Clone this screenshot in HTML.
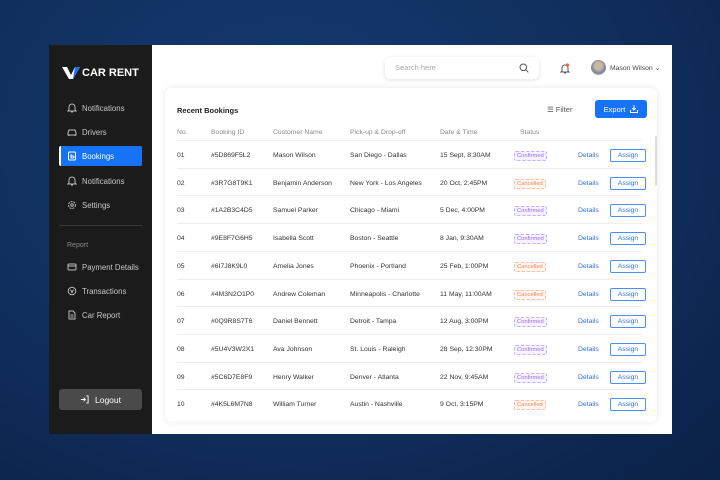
<!DOCTYPE html>
<html><head><meta charset="utf-8"><style>
*{box-sizing:border-box;margin:0;padding:0}
body{width:720px;height:480px;overflow:hidden;font-family:"Liberation Sans",sans-serif;background:radial-gradient(ellipse at 40% 30%,#153a72 0%,#11305f 50%,#0b2147 100%);position:relative}
.frame{position:absolute;left:49px;top:45px;width:623px;height:389px;display:flex}
.side{width:103px;background:#1b1b1b;position:relative;color:#bdbdbd;font-size:7.8px}
.main{flex:1;background:#fff;position:relative}
.logo{position:absolute;left:13px;top:21px;display:flex;align-items:center;color:#fff;font-weight:bold;font-size:11px}
.nav{position:absolute;left:10px;height:20px;width:83px;display:flex;align-items:center;padding-left:8px;gap:5px;color:#c8c8c8}
.nav svg{width:10px;height:10px}
.nav.act{background:#1673f5;color:#fff;border-left:2px solid #fff;border-radius:2px;padding-left:6px}
.sep{position:absolute;left:10px;width:83px;border-top:1px solid #3a3a3a;top:180px}
.rep{position:absolute;left:18px;top:197px;font-size:7px;color:#8a8a8a}
.logout{position:absolute;left:10px;top:344px;width:83px;height:21px;background:#4a4a4a;border-radius:3px;color:#fff;font-size:8.5px;display:flex;align-items:center;justify-content:center;gap:6px}
.search{position:absolute;left:233px;top:12px;width:154px;height:22px;border-radius:5px;box-shadow:0 1px 4px rgba(0,0,0,.12);font-size:7.5px;color:#aaa;padding:6px 10px}
.card{position:absolute;left:13px;top:43px;width:492px;height:334px;border-radius:6px;box-shadow:0 0 6px rgba(0,0,0,.1);background:#fff}
.t{position:absolute;font-size:6.8px;color:#333;white-space:nowrap}
.h{color:#8a8a8a}
.line{position:absolute;left:12px;width:465px;border-top:1px solid #eeeeee}
.badge{position:absolute;font-size:5.8px;padding:1px 2px;border:1px dashed;border-radius:2px}
.conf{color:#9b6ef3;border-color:#c6b0fa;background:#f6f1ff}
.canc{color:#f08a5c;border-color:#f8bfa3;background:#fff4ef}
.assign{position:absolute;width:36px;height:13px;border:1px solid #4b8ef6;border-radius:2px;color:#2f6fe0;font-size:6.8px;display:flex;align-items:center;justify-content:center}
.det{position:absolute;color:#2f6fe0;font-size:6.8px}
</style></head><body>
<div class="frame">
<div class="side">
 <div class="logo"><svg width="18" height="14" viewBox="0 0 18 14"><path d="M0 1h5l4 8 4-8h5l-7 12H7z" fill="#fff"/><path d="M13 1h5l-7 12z" fill="#1673f5"/></svg><span style="margin-left:2px">CAR RENT</span></div>
 <div class="nav" style="top:53px"><svg viewBox="0 0 10 10"><path d="M2 7V4a3 3 0 016 0v3l1 1H1zM4 9h2" stroke="#bbb" fill="none"/></svg>Notifications</div>
 <div class="nav" style="top:77px"><svg viewBox="0 0 10 10"><path d="M1 6l1-3h6l1 3v2H1zM2 8v1M8 8v1" stroke="#bbb" fill="none"/></svg>Drivers</div>
 <div class="nav act" style="top:101px"><svg viewBox="0 0 10 10"><rect x="1.5" y="1" width="7" height="8" rx="1" stroke="#fff" fill="none"/><path d="M4 3v4h2a1 1 0 000-2H4" stroke="#fff" fill="none"/></svg>Bookings</div>
 <div class="nav" style="top:126px"><svg viewBox="0 0 10 10"><path d="M2 7V4a3 3 0 016 0v3l1 1H1zM4 9h2" stroke="#bbb" fill="none"/></svg>Notifications</div>
 <div class="nav" style="top:150px"><svg viewBox="0 0 10 10"><circle cx="5" cy="5" r="3.5" stroke="#bbb" fill="none" stroke-dasharray="2 1"/><circle cx="5" cy="5" r="1.3" stroke="#bbb" fill="none"/></svg>Settings</div>
 <div class="sep"></div>
 <div class="rep">Report</div>
 <div class="nav" style="top:212px"><svg viewBox="0 0 10 10"><rect x="1" y="2" width="8" height="6" rx="1" stroke="#bbb" fill="none"/><path d="M1 4h8" stroke="#bbb"/></svg>Payment Details</div>
 <div class="nav" style="top:236px"><svg viewBox="0 0 10 10"><circle cx="5" cy="5" r="3.8" stroke="#bbb" fill="none"/><path d="M3.5 3.5L5 6.5 6.5 3.5" stroke="#bbb" fill="none"/></svg>Transactions</div>
 <div class="nav" style="top:260px"><svg viewBox="0 0 10 10"><path d="M2 1h4l2 2v6H2z" stroke="#bbb" fill="none"/><path d="M3.5 5h3M3.5 7h3" stroke="#bbb"/></svg>Car Report</div>
 <div class="logout"><svg width="9" height="9" viewBox="0 0 10 10"><path d="M1 5h5M4 3l2 2-2 2M7 1h2v8H7" stroke="#fff" fill="none"/></svg>Logout</div>
</div>
<div class="main">
 <div class="search">Search here<svg style="position:absolute;right:10px;top:6px" width="10" height="10" viewBox="0 0 10 10"><circle cx="4.3" cy="4.3" r="3.3" stroke="#555" fill="none"/><path d="M6.8 6.8L9.3 9.3" stroke="#555"/></svg></div>
 <svg style="position:absolute;left:408px;top:18px" width="10" height="11" viewBox="0 0 10 11"><path d="M2 8V5a3 3 0 016 0v3l1 1H1zM4 10h2" stroke="#555" fill="none"/><circle cx="7.5" cy="2" r="1.6" fill="#f0653a"/></svg>
 <div style="position:absolute;left:439px;top:15px;width:15px;height:15px;border-radius:50%;background:radial-gradient(circle at 50% 40%,#c9b8a8 30%,#7d8793 60%,#d0d4d8 100%)"></div>
 <div class="t" style="left:458px;top:19px;font-size:6.8px;color:#444">Mason Wilson ⌄</div>
 <div class="card">
  <div class="t" style="left:12px;top:18px;font-size:7.5px;font-weight:bold;color:#222">Recent Bookings</div>
  <div class="t" style="left:382px;top:17px;font-size:7.5px;color:#555">☰ Filter</div>
  <div style="position:absolute;left:430px;top:12px;width:52px;height:18px;background:#1673f5;border-radius:3px;color:#fff;font-size:7.5px;display:flex;align-items:center;justify-content:center;gap:5px">Export <svg width="8" height="8" viewBox="0 0 8 8"><path d="M4 0v5M2 3l2 2 2-2M0.5 5v2.5h7V5" stroke="#fff" fill="none"/></svg></div>
  <div class="t h" style="left:12px;top:41px">No.</div>
  <div class="t h" style="left:46px;top:41px">Booking ID</div>
  <div class="t h" style="left:108px;top:41px">Customer Name</div>
  <div class="t h" style="left:185px;top:41px">Pick-up &amp; Drop-off</div>
  <div class="t h" style="left:275px;top:41px">Date &amp; Time</div>
  <div class="t h" style="left:355px;top:41px">Status</div>
  <div style="position:absolute;left:490px;top:48px;width:2px;height:50px;background:#ddd;border-radius:1px"></div>
  <div id="rows"></div>
 </div>
</div>
</div>
<script>
var d=[["01","#5D869F5L2","Mason Wilson","San Diego - Dallas","15 Sept, 8:30AM",1],
["02","#3R7G8T9K1","Benjamin Anderson","New York - Los Angeles","20 Oct, 2:45PM",0],
["03","#1A2B3C4D5","Samuel Parker","Chicago - Miami","5 Dec, 4:00PM",1],
["04","#9E8F7G6H5","Isabella Scott","Boston - Seattle","8 Jan, 9:30AM",1],
["05","#6I7J8K9L0","Amelia Jones","Phoenix - Portland","25 Feb, 1:00PM",0],
["06","#4M3N2O1P0","Andrew Coleman","Minneapolis - Charlotte","11 May, 11:00AM",0],
["07","#0Q9R8S7T6","Daniel Bennett","Detroit - Tampa","12 Aug, 3:00PM",1],
["08","#5U4V3W2X1","Ava Johnson","St. Louis - Raleigh","28 Sep, 12:30PM",1],
["09","#5C6D7E8F9","Henry Walker","Denver - Atlanta","22 Nov, 9:45AM",1],
["10","#4K5L6M7N8","William Turner","Austin - Nashville","9 Oct, 3:15PM",0]];
var h="";
d.forEach(function(r,i){var y=64+i*27.7;
h+='<div class="line" style="top:'+(y-12)+'px"></div>';
h+='<div class="t" style="left:12px;top:'+y+'px">'+r[0]+'</div><div class="t" style="left:46px;top:'+y+'px">'+r[1]+'</div><div class="t" style="left:108px;top:'+y+'px">'+r[2]+'</div><div class="t" style="left:185px;top:'+y+'px">'+r[3]+'</div><div class="t" style="left:275px;top:'+y+'px">'+r[4]+'</div>';
h+='<div class="badge '+(r[5]?'conf':'canc')+'" style="left:349px;top:'+(y-1)+'px">'+(r[5]?'Confirmed':'Cancelled')+'</div>';
h+='<div class="det" style="left:413px;top:'+y+'px">Details</div><div class="assign" style="left:445px;top:'+(y-3)+'px">Assign</div>';});
document.getElementById('rows').innerHTML=h;
</script>
</body></html>
